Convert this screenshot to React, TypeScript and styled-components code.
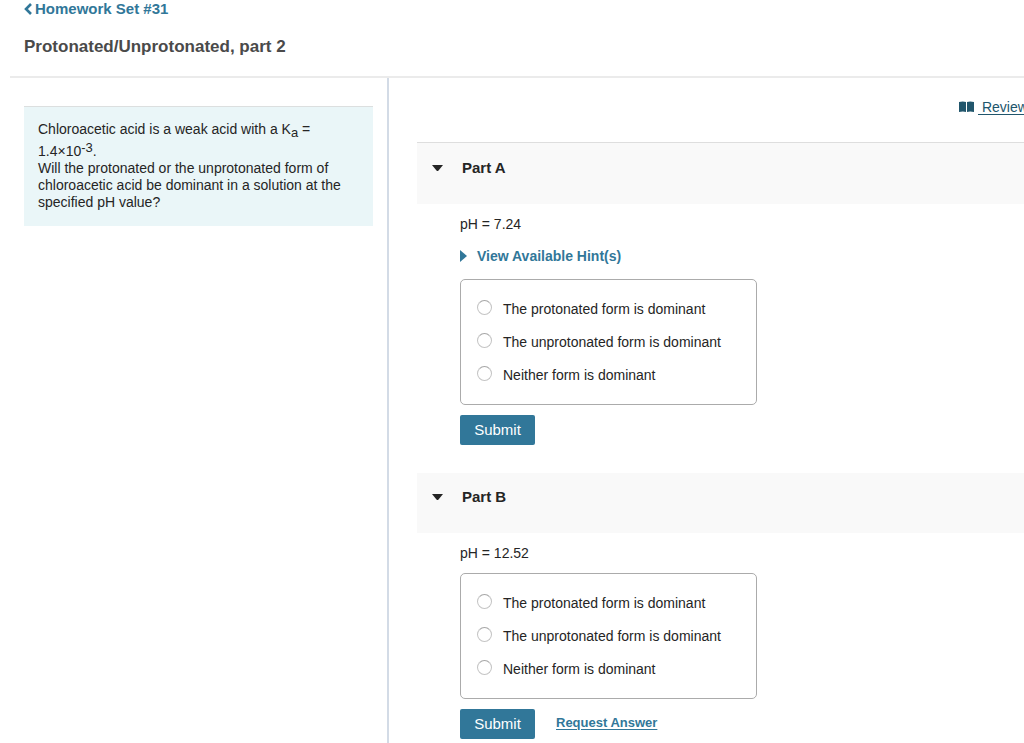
import React from "react";
import styled, { createGlobalStyle } from "styled-components";

const GlobalStyle = createGlobalStyle`
  *, *::before, *::after { box-sizing: border-box; }
  body {
    margin: 0;
    background: #fff;
    color: #252525;
    font: 14px/20px "Liberation Sans", Arial, sans-serif;
  }
  a { color: #317799; }
`;

const Page = styled.div`
  display: flex;
  flex-direction: column;
  min-height: 100vh;
`;

const Header = styled.header`
  margin-left: 10px;
  padding: 0 14px 19px;
  border-bottom: 2px solid #ebebeb;
`;

const BackLink = styled.a`
  display: flex;
  align-items: center;
  width: max-content;
  font-size: 15px;
  line-height: 18px;
  font-weight: bold;
  text-decoration: none;
`;

const BackIcon = styled.svg`
  width: 8px;
  height: 12px;
  margin-right: 3px;
  fill: none;
  stroke: #317799;
  stroke-width: 2.6;
`;

const Title = styled.h1`
  margin: 19px 0 0;
  font-size: 17px;
  line-height: 20px;
  color: #4a4a4a;
`;

const Columns = styled.div`
  display: flex;
  flex: 1;
`;

const Sidebar = styled.aside`
  flex: 0 0 389px;
  padding: 28px 14px 28px 24px;
  border-right: 2px solid #d3dbe6;
`;

const Problem = styled.p`
  margin: 0;
  padding: 14px 14px 15px;
  border-top: 1px solid #dcdfdf;
  background: #eaf6f8;
  line-height: 17px;

  sub, sup { font-size: 13px; line-height: 15px; }
  sub { vertical-align: -3px; }
  sup { vertical-align: 4px; }
`;

const Main = styled.main`
  flex: 1;
  min-width: 0;
  padding-left: 28px;
  overflow: hidden;
`;

const Tools = styled.nav`
  display: flex;
  justify-content: flex-end;
  padding: 19px 0 25px;
`;

const ReviewLink = styled.a`
  display: flex;
  align-items: center;
  flex: 0 0 65px;
  min-width: 0;
  white-space: pre;
  text-decoration: none;
  color: #21566c;

  span { text-decoration: underline; text-underline-offset: 2px; }
`;

const BookIcon = styled.svg`
  flex: none;
  width: 15px;
  height: 12px;
  margin-right: 4px;
  fill: #21566c;
`;

const PartSection = styled.section`
  margin-bottom: 28px;
`;

const PartHeader = styled.h2<{ $first?: boolean }>`
  margin: 0;
  padding: ${(p) => (p.$first ? "15px" : "14px")} 0 26px;
  border-top: ${(p) => (p.$first ? "1px solid #dedede" : "0")};
  background: #f9f9f9;
  font-size: 15px;
  line-height: 20px;
`;

const Toggle = styled.button`
  display: flex;
  align-items: center;
  gap: 19px;
  padding: 0 0 0 15px;
  border: 0;
  background: none;
  color: inherit;
  font: inherit;
`;

const DownIcon = styled.svg`
  width: 11px;
  height: 6px;
  fill: #252525;
`;

const PartBody = styled.form`
  display: flex;
  flex-direction: column;
  align-items: flex-start;
  gap: 10px;
  padding: 10px 0 0 43px;
`;

const Value = styled.p`
  margin: 0;
`;

const HintButton = styled.button`
  display: flex;
  align-items: center;
  gap: 10px;
  margin: 2px 0 3px;
  padding: 0;
  border: 0;
  background: none;
  color: #317799;
  font: bold 14px/20px "Liberation Sans", Arial, sans-serif;
`;

const RightIcon = styled.svg`
  width: 7px;
  height: 12px;
  fill: #317799;
`;

const Choices = styled.fieldset`
  width: 297px;
  margin: 0;
  padding: 12px 16px 13px;
  border: 1px solid #ababab;
  border-radius: 5px;
`;

const Choice = styled.label`
  display: flex;
  align-items: center;
  gap: 11px;
  height: 33px;
  white-space: nowrap;
`;

const Radio = styled.input`
  appearance: none;
  flex: none;
  width: 15px;
  height: 15px;
  margin: 0 0 2px;
  border: 1px solid #c4c4c4;
  border-top-color: #a6a6a6;
  border-radius: 50%;
  background: #fff;

  &:checked { border: 5px solid #317799; }
`;

const Actions = styled.div`
  display: flex;
  align-items: center;
  gap: 21px;
`;

const Submit = styled.button`
  width: 75px;
  height: 30px;
  padding: 0;
  border: 0;
  border-radius: 2px;
  background: #317799;
  color: #fff;
  font: 15px/20px "Liberation Sans", Arial, sans-serif;
`;

const RequestLink = styled.a`
  padding-bottom: 2px;
  font-size: 13px;
  font-weight: bold;
  text-underline-offset: 2px;
`;

const options = [
  "The protonated form is dominant",
  "The unprotonated form is dominant",
  "Neither form is dominant",
];

type PartProps = {
  name: string;
  ph: string;
  first?: boolean;
  hints?: boolean;
  request?: boolean;
};

function Part({ name, ph, first, hints, request }: PartProps) {
  return (
    <PartSection>
      <PartHeader $first={first}>
        <Toggle type="button" aria-expanded="true">
          <DownIcon viewBox="0 0 11 6" aria-hidden="true">
            <path d="M0 0h11L6.5 5.5Q5.5 6.5 4.5 5.5Z" />
          </DownIcon>
          Part {name}
        </Toggle>
      </PartHeader>
      <PartBody onSubmit={(e) => e.preventDefault()}>
        <Value>pH = {ph}</Value>
        {hints && (
          <HintButton type="button">
            <RightIcon viewBox="0 0 7 12" aria-hidden="true">
              <path d="M0 0l7 6-7 6z" />
            </RightIcon>
            View Available Hint(s)
          </HintButton>
        )}
        <Choices aria-label={`Part ${name}`}>
          {options.map((text) => (
            <Choice key={text}>
              <Radio type="radio" name={`part-${name}`} value={text} />
              {text}
            </Choice>
          ))}
        </Choices>
        <Actions>
          <Submit type="submit">Submit</Submit>
          {request && <RequestLink href="#answer">Request Answer</RequestLink>}
        </Actions>
      </PartBody>
    </PartSection>
  );
}

export default function App() {
  return (
    <>
      <GlobalStyle />
      <Page>
        <Header>
          <BackLink href="#homework">
            <BackIcon viewBox="0 0 8 12" aria-hidden="true">
              <path d="M7 1L2 6l5 5" />
            </BackIcon>
            Homework Set #31
          </BackLink>
          <Title>Protonated/Unprotonated, part 2</Title>
        </Header>
        <Columns>
          <Sidebar>
            <Problem>
              Chloroacetic acid is a weak acid with a K<sub>a</sub> = 1.4×10<sup>-3</sup>.
              <br />
              Will the protonated or the unprotonated form of chloroacetic acid
              be dominant in a solution at the specified pH value?
            </Problem>
          </Sidebar>
          <Main>
            <Tools>
              <ReviewLink href="#review">
                <BookIcon viewBox="0 0 15 12" aria-hidden="true">
                  <path d="M0 1Q4 0 7 1v10Q4 10 0 11zM8 1q3-1 7 0v10q-4-1-7 0z" />
                </BookIcon>
                <span> Review</span>
              </ReviewLink>
            </Tools>
            <Part name="A" ph="7.24" first hints />
            <Part name="B" ph="12.52" request />
          </Main>
        </Columns>
      </Page>
    </>
  );
}
